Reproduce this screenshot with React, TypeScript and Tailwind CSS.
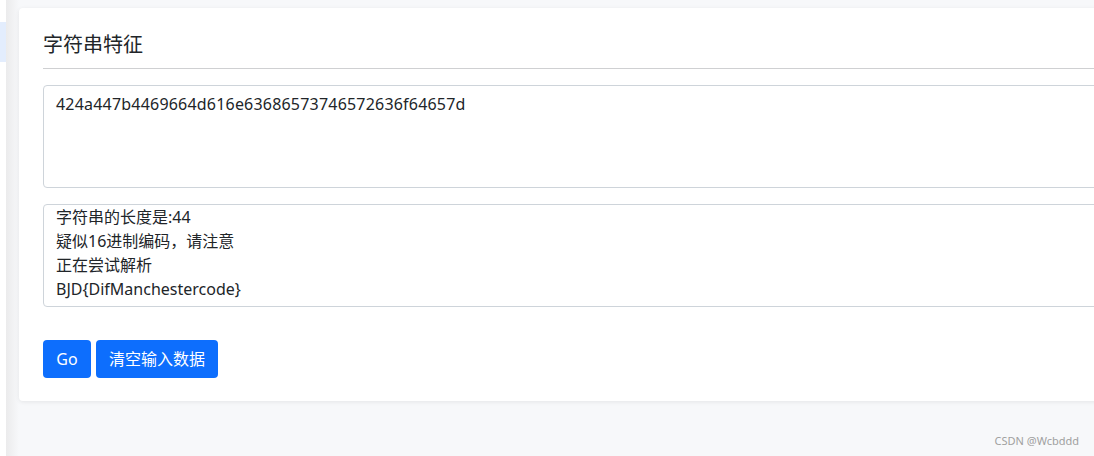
import React from 'react';

const font = { fontFamily: '"Noto Sans", "Noto Sans CJK SC", sans-serif' };

const outputLines = [
  '字符串的长度是:44',
  '疑似16进制编码，请注意',
  '正在尝试解析',
  'BJD{DifManchestercode}',
];

export default function App() {
  return (
    <div
      className="relative flex w-[1094px] h-[456px] overflow-hidden bg-[#f7f8fa] text-[#212529]"
      style={font}
    >
      {/* sidebar edge */}
      <div className="w-[6px] shrink-0 bg-white pt-[22px]">
        <div className="h-[40px] bg-[#e3edfd]" />
      </div>
      <div className="w-[13px] shrink-0 bg-gradient-to-r from-[#ebebec] to-[#f7f8fa]" />

      <div className="pt-[8px]">
        <div className="w-[1200px] rounded-[4px] bg-white px-6 pt-[25px] pb-[23px] shadow-[0_1px_4px_rgba(0,0,0,0.08)]">
          <h5 className="text-[20px] leading-[24px] font-normal">字符串特征</h5>
          <div className="mt-[11px] h-px bg-[#cfd0d2]" />

          <div className="mt-4 h-[103px] rounded-[4px] border border-[#ced4da] px-3 py-1.5 text-[16px] leading-[24px] tracking-[0.2px]">
            424a447b4469664d616e63686573746572636f64657d
          </div>

          <div className="mt-4 h-[103px] overflow-hidden rounded-[4px] border border-[#ced4da] px-3 pb-1.5 text-[16px] leading-[24px]">
            {outputLines.map((line) => (
              <div key={line}>{line}</div>
            ))}
          </div>

          <div className="mt-[33px] flex gap-[5px]">
            <button className="h-[38px] w-[48px] rounded-[4px] bg-[#0d6efd] text-[16px] text-white">Go</button>
            <button className="h-[38px] w-[122px] rounded-[4px] bg-[#0d6efd] text-[16px] text-white">清空输入数据</button>
          </div>
        </div>
      </div>

      <div className="absolute right-[15px] bottom-[7px] text-[11px] text-[#a0a0a0]">CSDN @Wcbddd</div>
    </div>
  );
}
